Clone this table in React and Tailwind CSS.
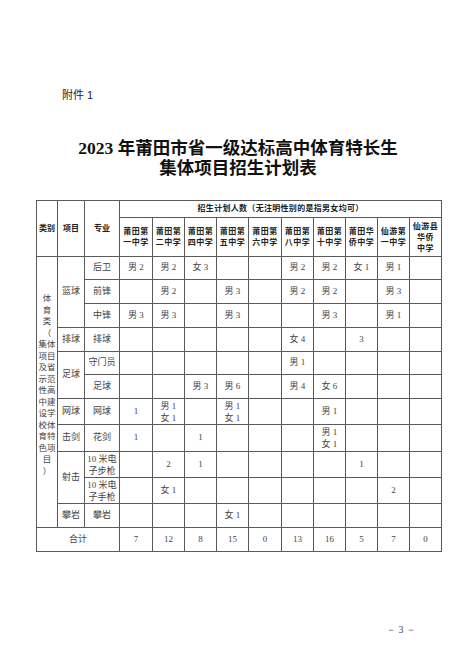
import React from "react";

const schools = [
  ["莆田第", "一中学"],
  ["莆田第", "二中学"],
  ["莆田第", "四中学"],
  ["莆田第", "五中学"],
  ["莆田第", "六中学"],
  ["莆田第", "八中学"],
  ["莆田第", "十中学"],
  ["莆田华", "侨中学"],
  ["仙游第", "一中学"],
  ["仙游县", "华侨", "中学"],
];

const rows = [
  { h: 23, item: { text: "篮球", rowSpan: 3 }, major: "后卫", vals: ["男 2", "男 2", "女 3", "", "", "男 2", "男 2", "女 1", "男 1", ""] },
  { h: 24, major: "前锋", vals: ["", "男 2", "", "男 3", "", "男 2", "男 2", "", "男 3", ""] },
  { h: 24, major: "中锋", vals: ["男 3", "男 3", "", "男 3", "", "", "男 3", "", "男 1", ""] },
  { h: 24, item: { text: "排球" }, major: "排球", vals: ["", "", "", "", "", "女 4", "", "3", "", ""] },
  { h: 23, item: { text: "足球", rowSpan: 2 }, major: "守门员", vals: ["", "", "", "", "", "男 1", "", "", "", ""] },
  { h: 24, major: "足球", vals: ["", "", "男 3", "男 6", "", "男 4", "女 6", "", "", ""] },
  { h: 26, item: { text: "网球" }, major: "网球", vals: ["1", ["男 1", "女 1"], "", ["男 1", "女 1"], "", "", "男 1", "", "", ""] },
  { h: 27, item: { text: "击剑" }, major: "花剑", vals: ["1", "", "1", "", "", "", ["男 1", "女 1"], "", "", ""] },
  { h: 26, item: { text: "射击", rowSpan: 2 }, major: ["10 米电", "子步枪"], vals: ["", "2", "1", "", "", "", "", "1", "", ""] },
  { h: 26, major: ["10 米电", "子手枪"], vals: ["", "女 1", "", "", "", "", "", "", "2", ""] },
  { h: 24, item: { text: "攀岩" }, major: "攀岩", vals: ["", "", "", "女 1", "", "", "", "", "", ""] },
];

const totals = ["7", "12", "8", "15", "0", "13", "16", "5", "7", "0"];

const catLines = ["体", "育", "类", "（", "集体", "项目", "及省", "示范", "性高", "中建", "设学", "校体", "育特", "色项", "目", "）"];

const colW = [21, 27, 35, 33, 32, 32, 32, 33, 32, 32, 32, 32, 32];

function Lines({ v }) {
  if (Array.isArray(v)) {
    return (
      <div className="flex flex-col items-center leading-[12px]">
        {v.map((t, i) => (
          <span key={i}>{t}</span>
        ))}
      </div>
    );
  }
  return <span>{v}</span>;
}

const cell = "border border-[#5a5a5a] p-0 text-center align-middle";

export default function App() {
  return (
    <div
      className="w-[474px] h-[670px] bg-white flex flex-col text-black"
      style={{}}
    >
      <div className="pt-[88px] pl-[62px] text-[11px] leading-[14px] text-[#222] font-['Liberation_Sans','Noto_Sans_CJK_SC',sans-serif]">
        附件 1
      </div>
      <div className="mt-[36px] flex flex-col items-center font-['Liberation_Serif','Noto_Sans_CJK_SC',serif] font-bold text-[17.5px] leading-[20px] text-[#111] pl-[2px]">
        <div>2023 年莆田市省一级达标高中体育特长生</div>
        <div>集体项目招生计划表</div>
      </div>
      <div className="mt-[22px] pl-[36px]">
        <table className="table-fixed border-collapse w-[405px] font-['Liberation_Serif','Noto_Sans_CJK_SC',serif] text-[9px] text-[#444]">
          <colgroup>
            {colW.map((w, i) => (
              <col key={i} style={{ width: w }} />
            ))}
          </colgroup>
          <tbody>
            <tr className="h-[17px]">
              <td rowSpan={2} className={`${cell} font-bold text-[8px] text-[#222]`}>类别</td>
              <td rowSpan={2} className={`${cell} font-bold text-[8px] text-[#222]`}>项目</td>
              <td rowSpan={2} className={`${cell} font-bold text-[8px] text-[#222]`}>专业</td>
              <td colSpan={10} className={`${cell} font-bold text-[8px] text-[#222] tracking-[0.3px]`}>
                招生计划人数（无注明性别的是指男女均可）
              </td>
            </tr>
            <tr className="h-[39px]">
              {schools.map((s, i) => (
                <td key={i} className={`${cell} font-bold text-[8px] text-[#222]`}>
                  <div className="flex flex-col items-center leading-[11px] tracking-[0.5px]">
                    {s.map((t, j) => (
                      <span key={j}>{t}</span>
                    ))}
                  </div>
                </td>
              ))}
            </tr>
            {rows.map((r, ri) => (
              <tr key={ri} style={{ height: r.h }}>
                {ri === 0 && (
                  <td rowSpan={11} className={`${cell} text-[8.5px] text-[#444]`}>
                    <div className="flex flex-col items-center leading-[11.5px] -mt-[14px]">
                      {catLines.map((t, i) => (
                        <span key={i}>{t}</span>
                      ))}
                    </div>
                  </td>
                )}
                {r.item && (
                  <td rowSpan={r.item.rowSpan || 1} className={cell}>
                    {r.item.text}
                  </td>
                )}
                <td className={cell}>
                  <Lines v={r.major} />
                </td>
                {r.vals.map((v, vi) => (
                  <td key={vi} className={cell}>
                    <Lines v={v} />
                  </td>
                ))}
              </tr>
            ))}
            <tr className="h-[24px]">
              <td colSpan={3} className={cell}>合计</td>
              {totals.map((t, i) => (
                <td key={i} className={cell}>{t}</td>
              ))}
            </tr>
          </tbody>
        </table>
      </div>
      <div className="mt-auto pb-[33px] flex justify-end pr-[58px] text-[10px] leading-[14px] text-[#444] font-['Liberation_Serif',serif]">
        <span>－ 3 －</span>
      </div>
    </div>
  );
}
